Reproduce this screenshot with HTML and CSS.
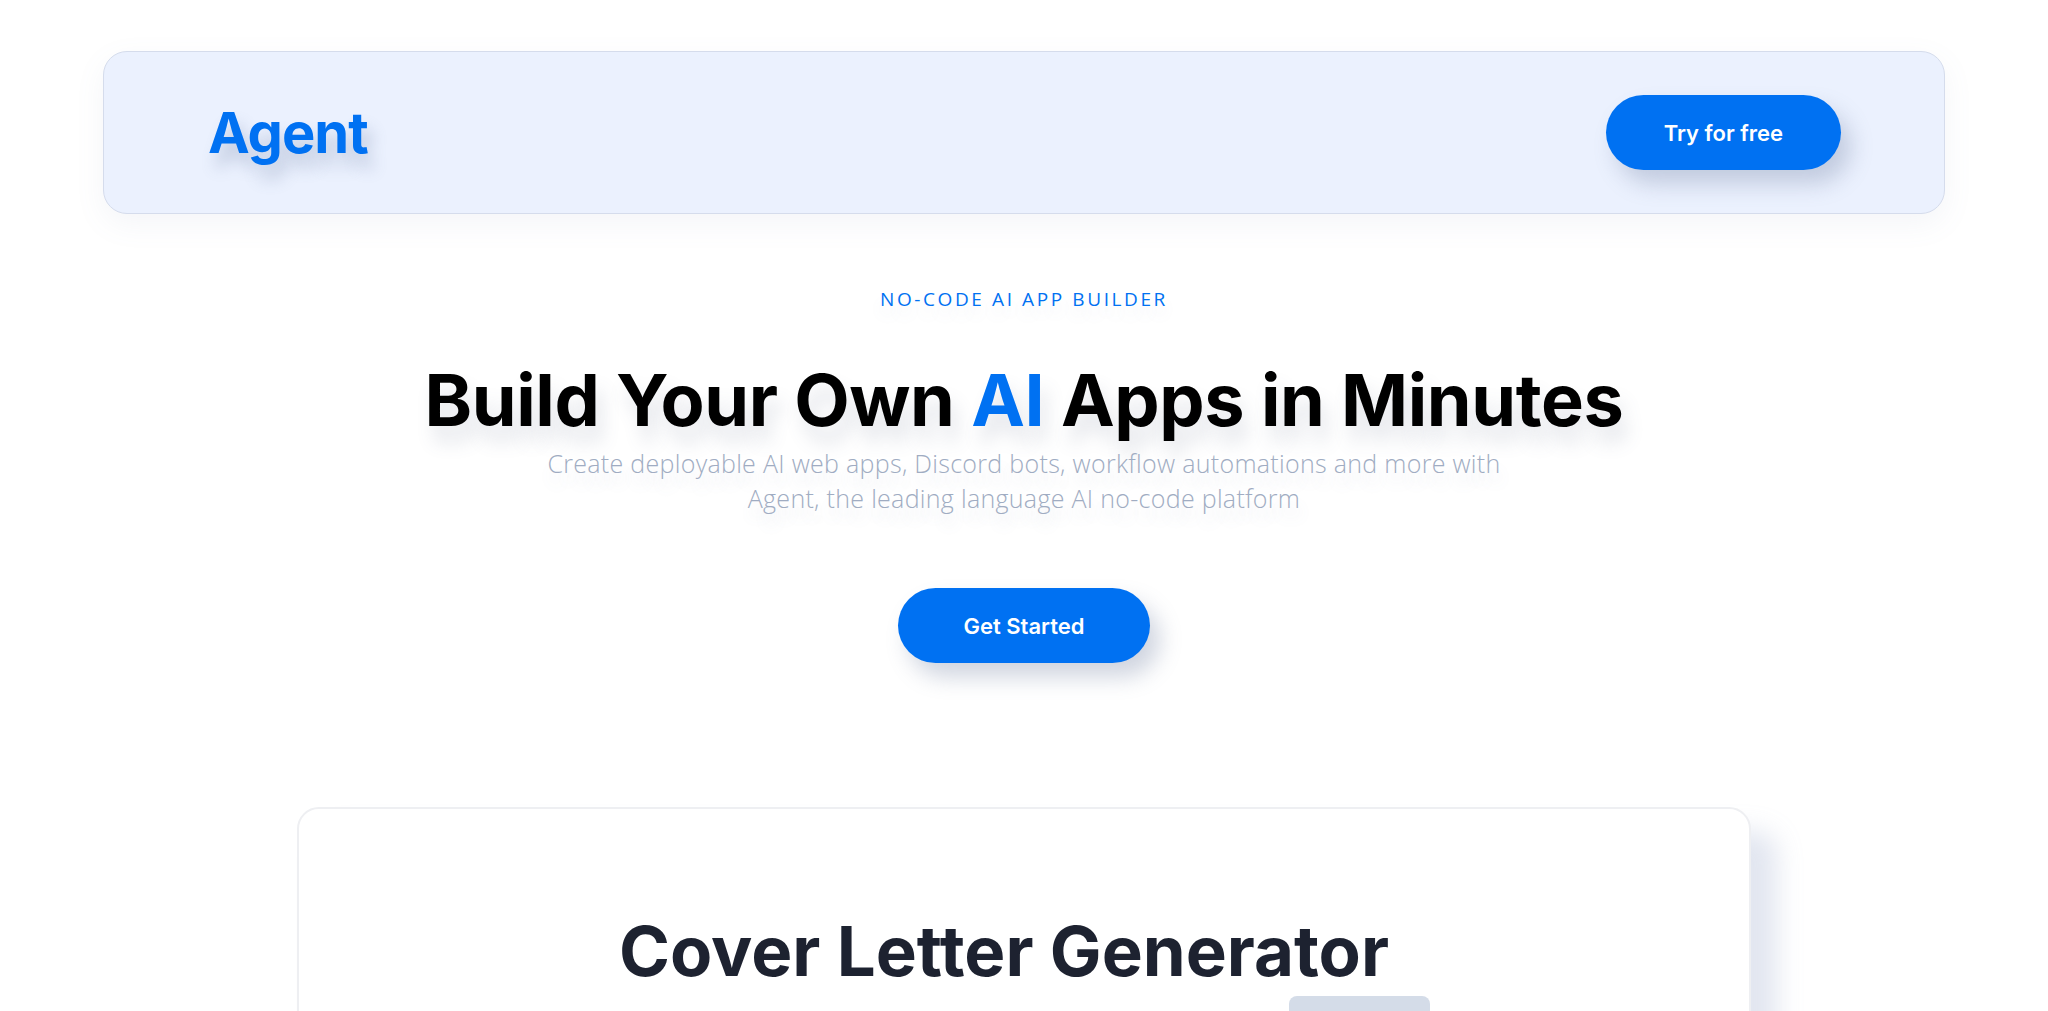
FILE: index.html
```html
<!DOCTYPE html>
<html lang="en">
<head>
<meta charset="utf-8">
<title>Agent - No-code AI App Builder</title>
<link rel="stylesheet" href="styles.css">
</head>
<body>
<div class="page">
  <header class="nav">
    <div class="logo">Agent</div>
    <a class="btn" href="#">Try for free</a>
  </header>

  <section class="hero">
    <p class="eyebrow">NO-CODE AI APP BUILDER</p>
    <h1 class="title">Build Your Own <span class="accent">AI</span> Apps in Minutes</h1>
    <p class="subtitle">Create deployable AI web apps, Discord bots, workflow automations and more with<br>Agent, the leading language AI no-code platform</p>
    <a class="btn btn-lg" href="#">Get Started</a>
  </section>

  <section class="card">
    <h2 class="card-title">Cover Letter Generator</h2>
    <div class="card-row">
      <div class="chip"></div>
    </div>
  </section>
</div>
</body>
</html>
```

FILE: styles.css
```css
* { box-sizing: border-box; }
html, body { margin: 0; padding: 0; background: #ffffff; }
body { font-family: Inter, "Noto Sans", sans-serif; overflow: hidden; height: 1011px; }

.page { padding-top: 51px; }

.nav {
  width: 1842px;
  height: 163px;
  margin: 0 auto;
  padding: 0 103px 0 104px;
  display: flex;
  align-items: center;
  justify-content: space-between;
  background: #ebf1fe;
  border: 1.5px solid #d5dcec;
  border-radius: 24px;
  box-shadow: 0 10px 30px rgba(120, 130, 160, 0.08);
}

.logo {
  font-size: 56px;
  font-weight: 700;
  color: #0071f2;
  line-height: 1;
  letter-spacing: -1px;
  text-shadow: 6px 14px 16px rgba(90, 110, 150, 0.3);
}

.btn {
  display: inline-flex;
  align-items: center;
  justify-content: center;
  height: 75px;
  padding: 0 58px;
  border-radius: 38px;
  background: #0071f2;
  color: #ffffff;
  font-family: Inter, sans-serif;
  font-size: 22px;
  font-weight: 600;
  text-decoration: none;
  box-shadow: 10px 14px 22px rgba(110, 125, 160, 0.32);
}

.btn-lg { padding: 0 65px; }

.hero {
  text-align: center;
  padding-top: 72px;
}

.eyebrow {
  margin: 0;
  font-family: "Open Sans", sans-serif;
  font-size: 19px;
  line-height: 26px;
  letter-spacing: 2.6px;
  color: #0071f2;
  text-shadow: 0 10px 14px rgba(120, 135, 170, 0.12);
}

.title {
  margin: 52px 0 0;
  font-size: 72px;
  font-weight: 700;
  line-height: 1;
  letter-spacing: -0.4px;
  color: #000000;
  text-shadow: 6px 16px 18px rgba(90, 100, 130, 0.17);
}

.accent { color: #0071f2; }

.subtitle {
  margin: 10px 0 0;
  font-family: "Open Sans", sans-serif;
  font-weight: 300;
  font-size: 25px;
  line-height: 35px;
  letter-spacing: 0.3px;
  color: #a0acc2;
  text-shadow: 2px 12px 14px rgba(110, 125, 160, 0.16);
}

.hero .btn-lg { margin-top: 72px; }

.card {
  width: 1454px;
  margin: 144px auto 0;
  height: 400px;
  background: #ffffff;
  border: 2px solid #eeeff2;
  border-radius: 22px;
  box-shadow: 26px 24px 26px rgba(150, 165, 200, 0.28);
  padding-top: 108px;
}

.card-title {
  margin: 0;
  padding-right: 40px;
  text-align: center;
  font-size: 69px;
  font-weight: 700;
  line-height: 1;
  letter-spacing: 0;
  color: #1d2230;
}

.card-row {
  display: flex;
  justify-content: flex-end;
  padding-right: 319px;
  margin-top: 10px;
}

.chip {
  width: 141px;
  height: 60px;
  border-radius: 8px;
  background: #d4dce8;
}
```
